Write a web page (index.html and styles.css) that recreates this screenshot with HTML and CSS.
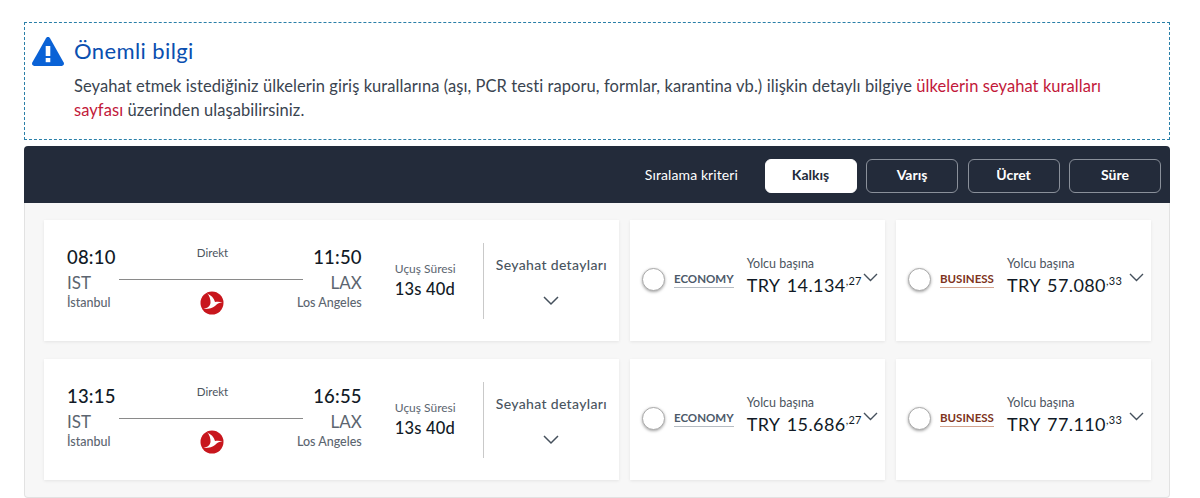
FILE: index.html
```html
<!DOCTYPE html>
<html lang="tr">
<head>
<meta charset="utf-8">
<title>Uçuş seçimi</title>
<link rel="stylesheet" href="styles.css">
</head>
<body>
<main class="page">
  <section class="notice">
    <h2 class="notice-title">
      <svg class="warn" width="34" height="31" viewBox="0 0 34 31"><path d="M17 1c-.9 0-1.600.5-2 1.200L1.300 26.600c-.9 1.700.2 3.400 2 3.400h27.400c1.800 0 2.900-1.700 2-3.400L19 2.200c-.4-.7-1.100-1.200-2-1.200z" fill="#0a62d6"/><rect x="14.700" y="10" width="4.600" height="10" fill="#fff"/><rect x="14.700" y="22" width="4.600" height="4.200" fill="#fff"/></svg>
      <span>Önemli bilgi</span>
    </h2>
    <p class="notice-text">Seyahat etmek istediğiniz ülkelerin giriş kurallarına (aşı, PCR testi raporu, formlar, karantina vb.) ilişkin detaylı bilgiye <a class="notice-link">ülkelerin seyahat kuralları sayfası</a> üzerinden ulaşabilirsiniz.</p>
  </section>

  <section class="results">
    <header class="sortbar">
      <span class="sort-label">Sıralama kriteri</span>
      <button class="sort-btn active">Kalkış</button>
      <button class="sort-btn">Varış</button>
      <button class="sort-btn">Ücret</button>
      <button class="sort-btn">Süre</button>
    </header>
    <div class="rows">
      <article class="row">
        <div class="card flight">
          <div class="route">
            <div class="stop"><b class="time">08:10</b><span class="code">IST</span><span class="city">İstanbul</span></div>
            <div class="mid">
              <span class="direct">Direkt</span>
              <span class="line"></span>
              <svg class="logo" width="24" height="24" viewBox="0 0 24 24"><circle cx="12" cy="12" r="11.500" fill="#c8161d"/><path d="M7 2.500C11 4 14 7 15 11c2.500-.5 5-.3 7.500.5-3.500.2-6 1.500-7.500 3.500-2.500 2-6.500 3.300-11.500 3 4.500-1 6.500-3 7-6 .3-3.500-1-7-3.500-10z" fill="#fff"/></svg>
            </div>
            <div class="stop end"><b class="time">11:50</b><span class="code">LAX</span><span class="city">Los Angeles</span></div>
          </div>
          <div class="duration"><span class="dur-label">Uçuş Süresi</span><b class="dur-value">13s 40d</b></div>
          <div class="details"><span class="details-text">Seyahat detayları</span>
            <svg class="chev-lg" width="16" height="10" viewBox="0 0 16 10"><path d="M1 1l7 7 7-7" fill="none" stroke="#45505c" stroke-width="1.500"/></svg>
          </div>
        </div>
        <div class="card fare eco">
          <span class="radio"></span><span class="cabin eco-label">ECONOMY</span>
          <div class="price-box"><span class="per">Yolcu başına</span><span class="price">TRY <span class="amount">14.134</span><sup>,27</sup></span></div>
          <svg class="chev" width="15" height="9" viewBox="0 0 15 9"><path d="M1 1l6.500 6.500L14 1" fill="none" stroke="#45505c" stroke-width="1.400"/></svg>
        </div>
        <div class="card fare bus">
          <span class="radio"></span><span class="cabin bus-label">BUSINESS</span>
          <div class="price-box"><span class="per">Yolcu başına</span><span class="price">TRY <span class="amount">57.080</span><sup>,33</sup></span></div>
          <svg class="chev" width="15" height="9" viewBox="0 0 15 9"><path d="M1 1l6.500 6.500L14 1" fill="none" stroke="#45505c" stroke-width="1.400"/></svg>
        </div>
      </article>
      <article class="row">
        <div class="card flight">
          <div class="route">
            <div class="stop"><b class="time">13:15</b><span class="code">IST</span><span class="city">İstanbul</span></div>
            <div class="mid">
              <span class="direct">Direkt</span>
              <span class="line"></span>
              <svg class="logo" width="24" height="24" viewBox="0 0 24 24"><circle cx="12" cy="12" r="11.500" fill="#c8161d"/><path d="M7 2.500C11 4 14 7 15 11c2.500-.5 5-.3 7.500.5-3.500.2-6 1.500-7.500 3.500-2.500 2-6.500 3.300-11.500 3 4.500-1 6.500-3 7-6 .3-3.500-1-7-3.500-10z" fill="#fff"/></svg>
            </div>
            <div class="stop end"><b class="time">16:55</b><span class="code">LAX</span><span class="city">Los Angeles</span></div>
          </div>
          <div class="duration"><span class="dur-label">Uçuş Süresi</span><b class="dur-value">13s 40d</b></div>
          <div class="details"><span class="details-text">Seyahat detayları</span>
            <svg class="chev-lg" width="16" height="10" viewBox="0 0 16 10"><path d="M1 1l7 7 7-7" fill="none" stroke="#45505c" stroke-width="1.500"/></svg>
          </div>
        </div>
        <div class="card fare eco">
          <span class="radio"></span><span class="cabin eco-label">ECONOMY</span>
          <div class="price-box"><span class="per">Yolcu başına</span><span class="price">TRY <span class="amount">15.686</span><sup>,27</sup></span></div>
          <svg class="chev" width="15" height="9" viewBox="0 0 15 9"><path d="M1 1l6.500 6.500L14 1" fill="none" stroke="#45505c" stroke-width="1.400"/></svg>
        </div>
        <div class="card fare bus">
          <span class="radio"></span><span class="cabin bus-label">BUSINESS</span>
          <div class="price-box"><span class="per">Yolcu başına</span><span class="price">TRY <span class="amount">77.110</span><sup>,33</sup></span></div>
          <svg class="chev" width="15" height="9" viewBox="0 0 15 9"><path d="M1 1l6.500 6.500L14 1" fill="none" stroke="#45505c" stroke-width="1.400"/></svg>
        </div>
      </article>
    </div>
  </section>
</main>
</body>
</html>
```
FILE: styles.css
```css
* { box-sizing: border-box; }
html, body { margin: 0; height: 498px; overflow: hidden; background: #fff; }
body { font-family: "Lato", "Open Sans", sans-serif; color: #1c2430; }
.page { padding: 22px 30px 0 24px; display: flex; flex-direction: column; gap: 6px; }

.notice { height: 118px; border: 1px dashed #2a7fa8; padding: 11px 6px 0 6px; }
.notice-title { margin: 0; display: flex; align-items: center; gap: 9px; font-size: 22px; font-weight: 400; color: #0a4fb0; line-height: 34px; letter-spacing: .4px; }
.notice-text { margin: 6px 50px 0 43px; font-size: 16.500px; line-height: 24px; color: #3a4450; letter-spacing: .07px; }
.notice-link { color: #c2183a; }

.results { display: flex; flex-direction: column; }
.sortbar { height: 57px; background: #232b3a; border-radius: 4px 4px 0 0; display: flex; align-items: center; justify-content: flex-end; gap: 9.500px; padding: 2px 9px 0 0; }
.sort-label { color: #fff; font-size: 14px; margin: -2px 17px 0 0; letter-spacing: .1px; }
.sort-btn { width: 92px; height: 34px; border-radius: 6px; border: 1px solid #8a909a; background: transparent; color: #fff; font: 700 14px "Lato", sans-serif; padding: 0 0 2px; }
.sort-btn.active { background: #fff; color: #232b3a; border-color: #fff; }

.rows { height: 295px; background: #f7f7f7; border: 1px solid #e2e2e2; border-top: 0; border-radius: 0 0 4px 4px; padding: 17px 18px 0 19px; display: flex; flex-direction: column; gap: 18px; }
.row { display: grid; grid-template-columns: 575px 255px 255px; gap: 11px; height: 121px; }
.card { background: #fff; box-shadow: 0 1px 3px rgba(0,0,0,.08); display: flex; }

.flight { padding: 0 12px 0 23px; align-items: center; }
.route { width: 295px; display: flex; justify-content: space-between; position: relative; height: 100%; }
.stop { display: flex; flex-direction: column; padding-top: 26px; position: relative; z-index: 1; }
.stop.end { align-items: flex-end; }
.time { font-size: 18.500px; font-weight: 500; line-height: 23px; color: #111a26; letter-spacing: .2px; }
.code { font-size: 17px; line-height: 27px; color: #5c6570; }
.city { font-size: 12.500px; line-height: 13px; color: #5c6570; font-weight: 500; }
.mid { position: absolute; left: 52px; width: 184px; top: 0; height: 100%; display: flex; flex-direction: column; align-items: center; }
.direct { font-size: 11.500px; line-height: 14px; color: #4c5560; margin: 26px 0 0 3px; }
.line { width: 184px; height: 1px; background: #8a8a8a; margin-top: 19px; }
.logo { margin-top: 11px; margin-left: 2px; }

.duration { width: 88px; margin-left: 33px; display: flex; flex-direction: column; }
.dur-label { font-size: 12px; line-height: 16px; color: #5c6570; }
.dur-value { font-size: 16.500px; line-height: 24px; font-weight: 500; color: #111a26; letter-spacing: .2px; }
.details { flex: 1; height: 76px; border-left: 1px solid #c9c9c9; padding-left: 12px; display: flex; flex-direction: column; align-items: center; }
.details-text { font-size: 14px; line-height: 16px; font-weight: 500; color: #4a5560; margin-top: 14px; white-space: nowrap; letter-spacing: .34px; }
.chev-lg { margin-top: 23px; }

.fare { align-items: center; position: relative; padding-left: 12px; }
.radio { width: 23px; height: 23px; border-radius: 50%; background: #fff; border: 1px solid #aaa; box-shadow: 0 1px 3px rgba(0,0,0,.35); flex: none; margin-top: -2px; }
.cabin { font-size: 11.500px; font-weight: 700; padding-bottom: 1px; margin: -2px 13px 0 9px; line-height: 15px; }
.eco-label { color: #4d5a6a; border-bottom: 1px solid #b6bcc2; }
.bus-label { color: #7e3320; border-bottom: 1px solid #d3a48f; }
.price-box { display: flex; flex-direction: column; margin-top: -7px; }
.per { font-size: 12.500px; line-height: 16px; color: #4c5560; }
.price { font-size: 18px; line-height: 25px; margin-top: 1px; color: #111a26; white-space: nowrap; letter-spacing: .4px; word-spacing: 2px; }
.price sup { font-size: 11px; line-height: 0; letter-spacing: .3px; }
.chev { position: absolute; right: 7px; top: 53px; }
```
